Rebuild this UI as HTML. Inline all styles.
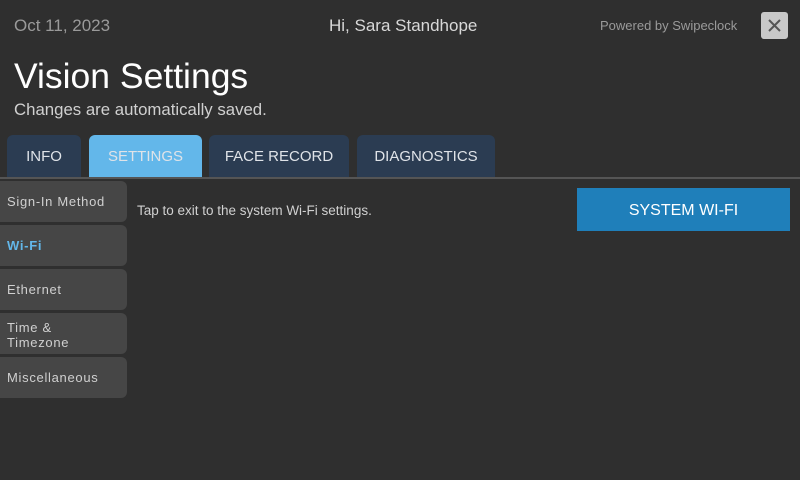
<html><head><style>
body{margin:0;width:800px;height:480px;background:#2f2f2f;font-family:"Liberation Sans",sans-serif;position:relative;overflow:hidden;color:#fff}
.a{position:absolute;white-space:nowrap}
.tab{position:absolute;top:135px;height:42px;background:#2b3c52;border-radius:6px 6px 0 0;color:#dfe3e8;font-size:15px;line-height:44px;text-align:center}
.side{position:absolute;left:-10px;width:137px;height:41px;background:#464646;border-radius:6px;color:#d0d0d0;font-size:13px;letter-spacing:0.7px;box-sizing:border-box;padding-left:17px;display:flex;align-items:center;line-height:15px}
</style></head><body>
<div class="a" style="left:14px;top:16px;font-size:17px;color:#9a9a9a">Oct 11, 2023</div>
<div class="a" style="left:329px;top:16px;font-size:17px;color:#d8d8d8">Hi, Sara Standhope</div>
<div class="a" style="left:600px;top:18px;font-size:13px;color:#9a9a9a">Powered by Swipeclock</div>
<div class="a" style="left:761px;top:12px;width:27px;height:27px;background:#c8c8c8;border-radius:3px"><svg width="27" height="27"><path d="M8 8L19 19M19 8L8 19" stroke="#555" stroke-width="2"/></svg></div>
<div class="a" style="left:14px;top:56px;font-size:35.5px;color:#fff">Vision Settings</div>
<div class="a" style="left:14px;top:100px;font-size:16.8px;color:#d0d0d0">Changes are automatically saved.</div>
<div class="tab" style="left:7px;width:74px">INFO</div>
<div class="tab" style="left:89px;width:113px;background:#63b7ea">SETTINGS</div>
<div class="tab" style="left:209px;width:140px">FACE RECORD</div>
<div class="tab" style="left:357px;width:138px">DIAGNOSTICS</div>
<div class="a" style="left:0;top:177px;width:800px;height:2px;background:#555"></div>
<div class="side" style="top:181px">Sign-In Method</div>
<div class="side" style="top:225px;color:#63b7ea;font-weight:bold">Wi-Fi</div>
<div class="side" style="top:269px">Ethernet</div>
<div class="side" style="top:313px;padding-top:2px">Time &amp;<br>Timezone</div>
<div class="side" style="top:357px">Miscellaneous</div>
<div class="a" style="left:137px;top:203px;font-size:13.5px;color:#d0d0d0">Tap to exit to the system Wi-Fi settings.</div>
<div class="a" style="left:577px;top:188px;width:213px;height:43px;background:#1f7fba;color:#fff;font-size:16px;line-height:46px;text-align:center">SYSTEM WI-FI</div>
</body></html>
